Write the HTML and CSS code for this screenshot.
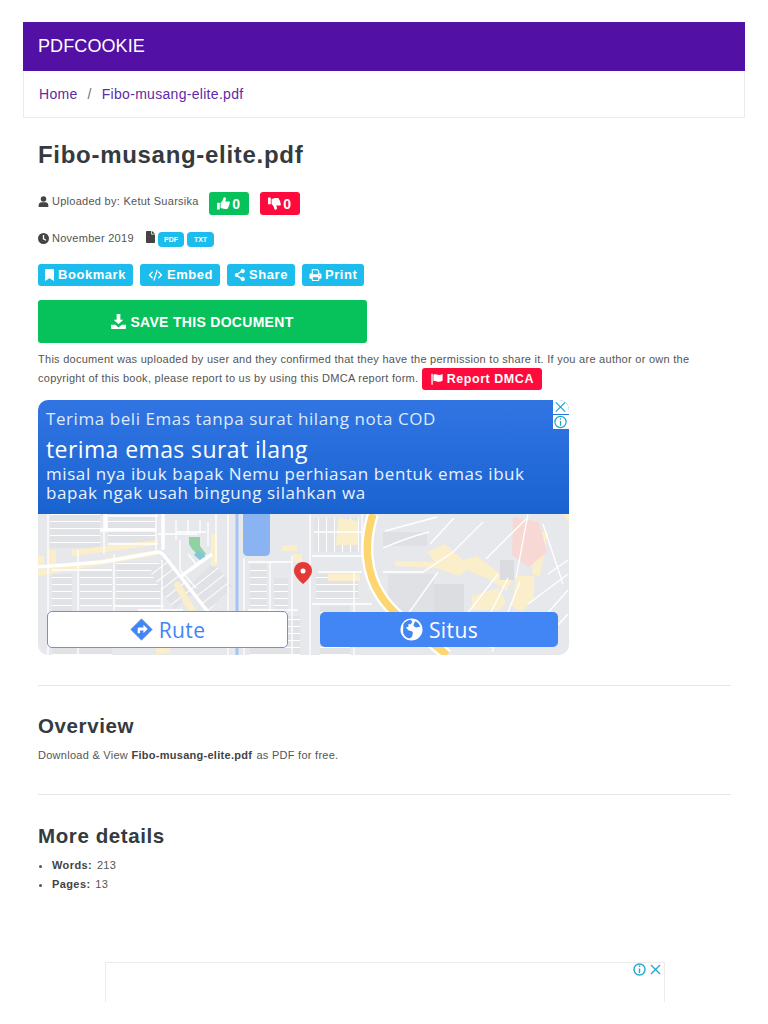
FILE: index.html
```html
<!DOCTYPE html>
<html lang="en">
<head>
<meta charset="utf-8">
<title>Fibo-musang-elite.pdf</title>
<link rel="stylesheet" href="styles.css">
</head>
<body>
<svg class="defs" width="0" height="0" aria-hidden="true">
  <symbol id="i-user" viewBox="0 0 16 16"><circle cx="8" cy="4.200" r="4"/><path d="M1 16v-2.600C1 10.600 3 9 5 9h6c2 0 4 1.600 4 4.400V16z"/></symbol>
  <symbol id="i-up" viewBox="0 0 16 16"><rect x="0" y="7" width="3.400" height="8.500" rx=".7"/><path d="M4.400 14.600V7.500c1.600-1.500 2.700-3 3.200-4.900.3-1.200.5-2.300 1.500-2.300 1.800 0 2.300 1.800 1.700 3.500l-.6 1.700h4c1 0 1.700.7 1.700 1.600 0 .6-.3 1-.7 1.300.4.900.1 1.700-.6 2.200.2 1-.2 1.700-.9 2.100.1 1.100-.6 2-1.900 2H9.800c-2.200 0-3.600-.9-5.400-1.200z"/></symbol>
  <symbol id="i-down" viewBox="0 0 16 16"><rect x="0" y=".5" width="3.400" height="8.500" rx=".7"/><path d="M4.400 1.400v7.100c1.600 1.500 2.700 3 3.200 4.900.3 1.200.5 2.300 1.500 2.300 1.800 0 2.300-1.800 1.700-3.500l-.6-1.700h4c1 0 1.700-.7 1.700-1.600 0-.6-.3-1-.7-1.300.4-.9.1-1.700-.6-2.200.2-1-.2-1.700-.9-2.100.1-1.100-.6-2-1.900-2H9.800c-2.200 0-3.600.9-5.400 1.200z"/></symbol>
  <symbol id="i-clock" viewBox="0 0 16 16"><path fill-rule="evenodd" d="M8 0a8 8 0 1 1 0 16A8 8 0 0 1 8 0zM7 3v6l4.200 2.400.9-1.500L9 8V3z"/></symbol>
  <symbol id="i-file" viewBox="0 0 12 16"><path d="M0 1c0-.6.400-1 1-1h6v4.500h5V15c0 .6-.4 1-1 1H1c-.6 0-1-.4-1-1zM8 0l4 3.500H8z"/></symbol>
  <symbol id="i-bookmark" viewBox="0 0 12 16"><path d="M0 1.500C0 .7.700 0 1.500 0h9c.8 0 1.500.7 1.500 1.500V16l-6-3.600L0 16z"/></symbol>
  <symbol id="i-code" viewBox="0 0 20 16"><path d="M5.500 3 .8 8l4.700 5 1.300-1.300L3.400 8l3.400-3.700zM14.500 3l-1.300 1.300L16.600 8l-3.400 3.700 1.300 1.300 4.700-5zM11.400 1 7 15l1.700.5L13.100 1.500z"/></symbol>
  <symbol id="i-share" viewBox="0 0 14 16"><path d="M11.300 0a2.800 2.800 0 1 1-2 4.700L5.500 7a2.800 2.800 0 0 1 0 2l3.800 2.300a2.800 2.800 0 1 1-.8 1.600l-3.900-2.300a2.800 2.800 0 1 1 0-5.200l3.900-2.300A2.800 2.800 0 0 1 11.300 0z"/></symbol>
  <symbol id="i-print" viewBox="0 0 16 16"><path fill-rule="evenodd" d="M3 0h7.500L13 2.500V6h1.300c1 0 1.700.7 1.700 1.700V12c0 .6-.4 1-1 1h-2v2c0 .6-.4 1-1 1H4c-.6 0-1-.4-1-1v-2H1c-.6 0-1-.4-1-1V7.700C0 6.700.7 6 1.700 6H3zm1.500 1.500V7h7V3.100L10 1.500zm0 9.500v3.500h7V11zM13 8a.8.8 0 1 0 0 1.600A.8.8 0 0 0 13 8z"/></symbol>
  <symbol id="i-download" viewBox="0 0 16 16"><path d="M6 0h4v6h3.200L8 11 2.800 6H6zM0 11.500h4.600L8 14.500l3.400-3h4.600V15c0 .6-.4 1-1 1H1c-.6 0-1-.4-1-1z"/></symbol>
  <symbol id="i-flag" viewBox="0 0 16 16"><path d="M.5 1h1.800v14.500H.5zM3.200 2.200c2.800-1.500 5 .8 8 .4 1.400-.2 2.800-.8 4.300-1.400v8.700c-1.500 1-3 1.700-4.600 1.800-2.800.2-5-2-7.700-.6z"/></symbol>
</svg>

<header class="navbar"><a class="brand">PDFCOOKIE</a></header>
<nav class="breadcrumb">
  <a>Home</a><span class="sep">/</span><a>Fibo-musang-elite.pdf</a>
</nav>

<main class="content">
  <h1 class="title">Fibo-musang-elite.pdf</h1>

  <div class="meta meta-upload">
    <svg class="ico meta-ico"><use href="#i-user"/></svg>
    <span class="meta-text">Uploaded by: Ketut Suarsika</span>
    <span class="vote vote-up"><svg class="ico"><use href="#i-up"/></svg>0</span>
    <span class="vote vote-down"><svg class="ico"><use href="#i-down"/></svg>0</span>
  </div>

  <div class="meta meta-date">
    <svg class="ico meta-ico"><use href="#i-clock"/></svg>
    <span>November 2019</span>
    <svg class="ico file-ico"><use href="#i-file"/></svg>
    <span class="tags"><span class="tag">PDF</span><span class="tag">TXT</span></span>
  </div>

  <div class="actions">
    <a class="btn"><svg class="ico ico-bookmark"><use href="#i-bookmark"/></svg>Bookmark</a>
    <a class="btn"><svg class="ico ico-code"><use href="#i-code"/></svg>Embed</a>
    <a class="btn"><svg class="ico ico-share"><use href="#i-share"/></svg>Share</a>
    <a class="btn"><svg class="ico ico-print"><use href="#i-print"/></svg>Print</a>
  </div>

  <a class="save"><svg class="ico ico-save"><use href="#i-download"/></svg>SAVE THIS DOCUMENT</a>

  <p class="notice">This document was uploaded by user and they confirmed that they have the permission to share it. If you are author or own the copyright of this book, please report to us by using this DMCA report form. <a class="report"><svg class="ico ico-flag"><use href="#i-flag"/></svg>Report DMCA</a></p>

  <section class="ad">
    <div class="ad-head">
      <p class="ad-line1">Terima beli Emas tanpa surat hilang nota COD</p>
      <p class="ad-line2">terima emas surat ilang</p>
      <p class="ad-line3">misal nya ibuk bapak Nemu perhiasan bentuk emas ibuk bapak ngak usah bingung silahkan wa</p>
    </div>
    <div class="ad-marks">
      <span class="ad-mark"><svg viewBox="0 0 15 15"><path d="M2.500 2.500l10 10M12.500 2.500l-10 10"/></svg></span>
      <span class="ad-mark"><svg viewBox="0 0 15 15"><circle cx="7.500" cy="7.500" r="6"/><path d="M7.500 6.500v5M7.500 3.500v1.600"/></svg></span>
    </div>
    <div class="ad-map">
      <svg class="map" viewBox="0 0 531 141" preserveAspectRatio="none">
        <defs>
          <pattern id="rows" width="60" height="7" patternUnits="userSpaceOnUse"><rect width="60" height="7" fill="#e1e2e5"/><path d="M0 .5h60" stroke="#fff" stroke-width="1"/></pattern>
          <pattern id="cols" width="8" height="60" patternUnits="userSpaceOnUse"><rect width="8" height="60" fill="#e3e4e7"/><path d="M.5 0v60" stroke="#fff" stroke-width="1"/></pattern>
          <pattern id="diag" width="9" height="9" patternUnits="userSpaceOnUse" patternTransform="rotate(-38)"><rect width="9" height="9" fill="#e1e2e5"/><path d="M0 .5h9" stroke="#fff" stroke-width="1"/></pattern>
        </defs>
        <rect width="531" height="141" fill="#e7e8eb"/>
        <!-- residential blocks, left -->
        <rect x="12" y="0" width="50" height="34" fill="url(#rows)"/>
        <rect x="70" y="2" width="48" height="26" fill="url(#rows)"/>
        <rect x="14" y="60" width="20" height="38" fill="url(#rows)"/>
        <rect x="42" y="56" width="32" height="36" fill="url(#rows)"/>
        <rect x="78" y="48" width="44" height="44" fill="url(#rows)"/>
        <rect x="14" y="104" width="60" height="37" fill="url(#rows)"/>
        <rect x="102" y="96" width="40" height="32" fill="url(#rows)"/>
        <path d="M130 42l24 38-18 16-24-38z" fill="url(#diag)"/>
        <path d="M150 72l26-24 18 24-24 26z" fill="url(#diag)"/>
        <!-- residential blocks, middle -->
        <rect x="212" y="50" width="17" height="44" fill="url(#rows)"/>
        <rect x="236" y="64" width="14" height="36" fill="url(#rows)"/>
        <rect x="212" y="102" width="50" height="39" fill="url(#rows)"/>
        <rect x="276" y="4" width="48" height="34" fill="url(#cols)"/>
        <rect x="278" y="60" width="42" height="26" fill="url(#rows)"/>
        <rect x="282" y="92" width="30" height="49" fill="url(#rows)"/>
        <!-- yellow land use -->
        <g fill="#fbeecb">
          <path d="M0 42h6v12H0zM10 36h8v16h-8zM34 36l86-10v5l-86 11zM0 56l120-20v5L0 62zM68 116l12-14 12 14-4 14-18 2zM115 128l12-2 6 12-14 3zM173 20h6v32h-6z"/>
          <path d="M135 70l6-3 37 64h-8zM204 18l8-1v6h-8zM244 32l15-1v6h-15zM255 40h9v8h-9zM290 60h32v7h-32z"/>
          <path d="M389 38l18-8 18 16 14-4 18 14-10 8-18-8-8 6-22-8-42-2 0-5 40 1zM434 82l26-8 8 14-6 8h-28zM440 45l34 22-6 10-34-24zM478 62h18v22l-12 14-10-6zM498 18h12l-8 44-8-2z"/>
          <path d="M300 4l20 3v24h-22zM525 0h6v9z"/>
        </g>
        <path d="M475 3l26 5 8 30-18 15-17-12z" fill="#f7d8d4"/>
        <rect x="345" y="18" width="44" height="14" fill="#dfe0e3"/>
        <rect x="350" y="60" width="46" height="40" fill="#e0e1e4"/>
        <rect x="396" y="70" width="30" height="30" fill="#dcdde0"/>
        <rect x="462" y="46" width="14" height="20" fill="#dbdcdf"/>
        <path d="M205 0h27v37q0 5-5 5h-17q-5 0-5-5z" fill="#8ab4f1"/>
        <path d="M151 23h11v9l6 8-5 4-9-9-3-5z" fill="#8fd3a3"/>
        <path d="M160 36l8 7-4 5-8-7z" fill="#86c5d8"/>
        <path d="M199 0v141" stroke="#a5c4f2" stroke-width="3" fill="none"/>
        <!-- thin streets -->
        <g fill="none" stroke="#fff" stroke-width="1.300">
          <path d="M10 0v141M40 36v105M66 0v40M76 40v62M118 0v36M124 46v50M70 2h50M70 30h50M14 56h60M14 100h60M100 96h45M136 96l12 30M76 92h50M120 20h40"/>
          <path d="M138 18h30M138 6v20M150 6v14M162 6v14M170 8v24M142 26v30l16 18M150 40l8 10 8-6M178 0v48"/>
          <path d="M190 0v141M206 44v97M232 48v50M254 42v99M210 48h44M210 96h50M272 0v141M324 0v40M274 42h56M274 90h60M280 58h44M316 58v83M276 18h48"/>
          <path d="M345 34c14-6 30-12 46-16M347 17l52-14M345 58h40l30-20 30-30M392 30l24-26M400 58l-30 42 22 2M362 100l30 30M398 102l56 32M460 60l-34 44M448 45l40-40M490 0l-12 64M470 64l-20 40M505 10l20 60M482 68l-28 70M500 110l30-34M510 122l20-22M490 90l40-30M510 60l20-14"/>
        </g>
        <!-- main roads -->
        <g fill="none" stroke="#fff" stroke-width="3.500" stroke-linejoin="round">
          <path d="M0 53l64-5 56-10q4 0 8 6l42 54M142 63l32-23M68 0v16M62 16h56M125 0v36"/>
        </g>
        <path d="M335 0c-9 28-8 58 8 82 14 22 44 40 66 59" fill="none" stroke="#fff" stroke-width="12"/>
        <path d="M335 0c-9 28-8 58 8 82 14 22 44 40 66 59" fill="none" stroke="#fdd671" stroke-width="7.500"/>
        <path d="M265 48c-5.500 0-9 4-9 9 0 6 9 13 9 13s9-7 9-13c0-5-3.500-9-9-9z" fill="#e53935"/>
        <circle cx="265" cy="57" r="2.500" fill="#fff"/>
      </svg>
      <a class="ad-btn ad-route">
        <svg class="ad-btn-ico" viewBox="0 0 24 24"><path d="M12 1l11 11-11 11L1 12z" fill="#4285f4" stroke="#4285f4" stroke-linejoin="round"/><path d="M8 16v-4.500q0-1.500 1.500-1.500H14V7l4.500 4.500L14 16v-3h-3.500v3z" fill="#fff"/></svg>
        Rute
      </a>
      <a class="ad-btn ad-site">
        <svg class="ad-btn-ico" viewBox="0 0 24 24"><circle cx="12" cy="12" r="11.500" fill="#fff"/><path d="M3.500 6.500C5 4 8 2 11 1.800L13 4l-2 2.500H8.500L9 9l-3 1 3 3 3 .5 1.500 2-1 4-2.500 2C6 20.500 4 18 3.200 15zM16 3.500c2.500 1 4 3 5 5.500l-4.500 1-2.500-2 1-3z" fill="#4285f4"/></svg>
        Situs
      </a>
    </div>
  </section>

  <hr class="rule rule-first">
  <h2 class="subhead subhead-first">Overview</h2>
  <p class="text">Download &amp; View <strong>Fibo-musang-elite.pdf</strong> as PDF for free.</p>
  <hr class="rule rule-second">
  <h2 class="subhead subhead-second">More details</h2>
  <ul class="details">
    <li><strong>Words:</strong> 213</li>
    <li><strong>Pages:</strong> 13</li>
  </ul>
</main>

<aside class="bottom-ad">
  <svg class="bottom-mark" viewBox="0 0 15 15"><circle cx="7.500" cy="7.500" r="5.500"/><path d="M7.500 6.500v4.500M7.500 3.600v1.500"/></svg>
  <svg class="bottom-mark" viewBox="0 0 15 15"><path d="M3 3l9 9M12 3l-9 9"/></svg>
</aside>
</body>
</html>
```

FILE: styles.css
```css
* { box-sizing: border-box; }
html, body { margin: 0; padding: 0; }
body {
  height: 1024px;
  overflow: hidden;
  background: #fff;
  padding-top: 22px;
  color: #343a40;
  font-family: "Liberation Sans", Arial, sans-serif;
}
.defs { position: absolute; }
.ico { display: inline-block; width: 11px; height: 11px; fill: currentColor; flex: none; }

.navbar {
  margin: 0 23px;
  height: 49px;
  background: #5310a4;
  padding: 0 15px;
  display: flex;
  align-items: center;
}
.brand { color: #fff; font-size: 18px; letter-spacing: .1px; }
.breadcrumb {
  margin: 0 23px;
  height: 47px;
  border: 1px solid #e9ecef;
  border-top: 0;
  padding: 0 15px;
  display: flex;
  align-items: center;
  font-size: 14px;
  color: #5e2aa8;
  letter-spacing: .3px;
}
.sep { color: #6c757d; padding: 0 10px; }

.content { padding: 0 37px 0 38px; }
.title {
  margin: 22px 0 0;
  height: 30px;
  font-size: 24px;
  line-height: 30px;
  font-weight: 700;
  letter-spacing: .7px;
}
.meta {
  display: flex;
  align-items: center;
  font-size: 11px;
  letter-spacing: .27px;
  color: #555;
}
.meta-ico { color: #444; margin-right: 3px; }
.meta-upload { margin-top: 22px; height: 23px; }
.meta-text { margin-bottom: 5px; }
.meta-upload .meta-ico { margin-bottom: 5px; }
.vote {
  height: 23px;
  width: 40px;
  border-radius: 3px;
  color: #fff;
  font-weight: 700;
  font-size: 14px;
  display: flex;
  align-items: center;
  justify-content: center;
  gap: 2px;
}
.vote .ico { width: 13px; height: 13px; }
.vote-up { background: #07c15b; margin-left: 10px; }
.vote-down { background: #ff0a3c; margin-left: 11px; }
.meta-date { margin-top: 12px; height: 22px; }
.file-ico { width: 9px; height: 12px; margin: 0 3px 0 12px; color: #444; position: relative; top: -1px; }
.tags { display: flex; gap: 3px; margin-top: 2px; }
.tag {
  background: #1cbcec;
  color: #fff;
  font-size: 7px;
  font-weight: 700;
  letter-spacing: 0;
  width: 26.500px;
  height: 15px;
  border-radius: 4px;
  display: flex;
  align-items: center;
  justify-content: center;
}
.actions { display: flex; gap: 7px; margin-top: 15px; }
.btn {
  background: #1cbcec;
  color: #fff;
  height: 22px;
  padding: 0 7px 1px;
  border-radius: 3px;
  font-size: 13px;
  font-weight: 700;
  letter-spacing: .55px;
  display: flex;
  align-items: center;
  gap: 3px;
}
.btn .ico { height: 12px; }
.ico-bookmark { width: 9px; margin-right: 1px; }
.ico-code { width: 17px; }
.ico-share { width: 11px; margin-right: 1px; }
.ico-print { width: 13px; }
.save {
  display: flex;
  align-items: center;
  justify-content: center;
  gap: 4px;
  margin-top: 14px;
  width: 329px;
  height: 43px;
  background: #07c15b;
  color: #fff;
  border-radius: 3px;
  font-size: 14px;
  font-weight: 700;
  letter-spacing: .3px;
}
.ico-save { width: 15px; height: 15px; }
.notice {
  margin: 7px 0 0;
  max-width: 660px;
  font-size: 11px;
  line-height: 18px;
  letter-spacing: .27px;
  color: #555;
  height: 50px;
}
.report {
  display: inline-flex;
  align-items: center;
  gap: 3px;
  height: 22px;
  padding: 0 8px;
  background: #ff0a3c;
  color: #fff;
  border-radius: 3px;
  font-size: 12.500px;
  font-weight: 700;
  letter-spacing: .55px;
  vertical-align: middle;
}
.ico-flag { width: 14px; height: 12px; }

.ad {
  position: relative;
  width: 531px;
  height: 255px;
  border-radius: 10px;
  overflow: hidden;
  font-family: "Open Sans", "Noto Sans", sans-serif;
}
.ad-head {
  height: 114px;
  background: linear-gradient(#3175e3, #1963d0);
  color: #fff;
  padding: 7px 8px 0;
}
.ad-head p { margin: 0; }
.ad-line1 { font-size: 17px; line-height: 23px; letter-spacing: .57px; color: #dceafc; }
.ad-line2 { font-size: 23px; line-height: 30px; letter-spacing: .4px; margin-top: 4px !important; }
.ad-line3 { font-size: 17px; line-height: 19px; letter-spacing: .58px; color: #eaf2fd; max-width: 505px; }
.ad-marks {
  position: absolute;
  top: 0;
  right: 0;
  width: 16px;
  display: flex;
  flex-direction: column;
  gap: 1px;
}
.ad-mark { display: block; height: 14px; background: #fff; }
.ad-mark svg { display: block; width: 15px; height: 14px; fill: none; stroke: #18a7c7; stroke-width: 1.300; }
.ad-map { position: relative; height: 141px; }
.map { display: block; width: 100%; height: 100%; }
.ad-btn {
  position: absolute;
  border-radius: 5px;
  display: flex;
  align-items: center;
  justify-content: center;
  gap: 6px;
  font-size: 21px;
  letter-spacing: .4px;
}
.ad-btn-ico { width: 23px; height: 23px; }
.ad-route {
  top: 97px;
  height: 37px;
  left: 9px;
  width: 241px;
  background: #fff;
  border: 1px solid #5c95f5;
  color: #4285f4;
}
.ad-site {
  top: 98px;
  height: 35px;
  left: 282px;
  width: 238px;
  background: #4285f4;
  color: #fff;
}

.rule { border: 0; border-top: 1px solid #e6e6e6; margin: 0; }
.rule-first { margin-top: 30px; }
.rule-second { margin-top: 30px; }
.subhead {
  font-size: 20.500px;
  line-height: 24px;
  font-weight: 700;
  letter-spacing: .6px;
  margin: 29px 0 0;
}
.subhead-first { margin-top: 28px; }
.text {
  margin: 8px 0 0;
  font-size: 11px;
  line-height: 18px;
  letter-spacing: .27px;
  color: #555;
}
.text strong { color: #444; letter-spacing: .28px; margin-right: 1px; }
.details {
  margin: 8px 0 0;
  padding: 0 0 0 14px;
  font-size: 11px;
  line-height: 19px;
  letter-spacing: .27px;
  color: #555;
}
.details strong { color: #444; letter-spacing: .4px; margin-right: 1.500px; }
.bottom-ad {
  position: absolute;
  top: 962px;
  left: 105px;
  width: 560px;
  height: 40px;
  border: 1px solid #ececec;
  border-bottom: 0;
  display: flex;
  justify-content: flex-end;
  gap: 1px;
  padding: 0 1px;
}
.bottom-mark { width: 15px; height: 15px; fill: none; stroke: #28a8cc; stroke-width: 1.400; margin-top: -1px; }
```
